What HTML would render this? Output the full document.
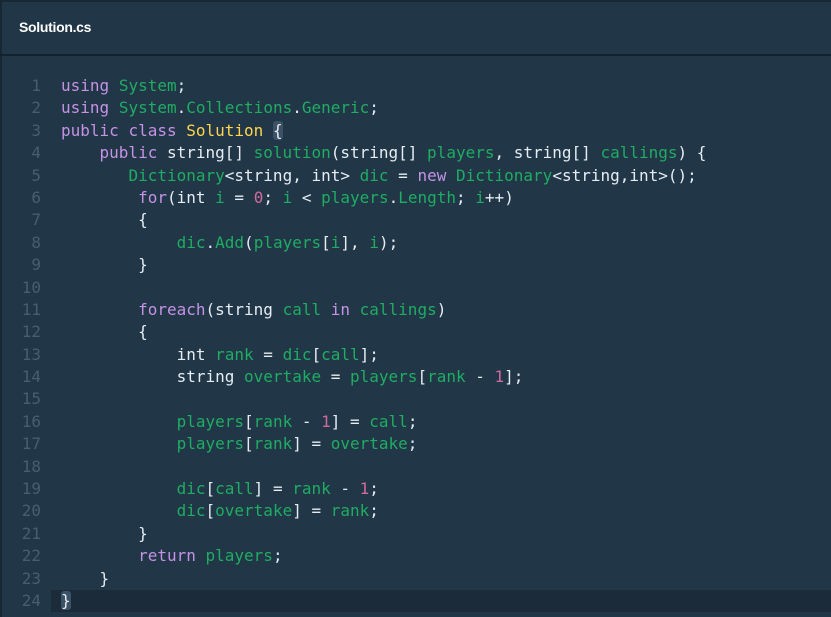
<!DOCTYPE html>
<html><head><meta charset="utf-8">
<style>
html,body{margin:0;padding:0;height:617px;overflow:hidden}
body{width:831px;height:617px;background:#213647;position:relative;overflow:hidden;font-family:"DejaVu Sans Mono","Liberation Mono",monospace}
.top{position:absolute;left:0;top:0;width:831px;height:2px;background:#172835}
.left{position:absolute;left:0;top:0;width:2px;height:617px;background:#172835}
.hdr{position:absolute;left:19px;top:19px;font-family:"Liberation Sans",sans-serif;font-weight:bold;font-size:14px;color:#fff;letter-spacing:-0.3px}
.div{position:absolute;left:0;top:54px;width:831px;height:2px;background:#14222e}
.code{position:absolute;left:0;top:75px;width:831px;font-size:16px;line-height:22.4px;white-space:normal}
.ln{position:relative;height:22.4px;color:#e6edf2}
.ln .no{position:absolute;left:0;width:41px;text-align:right;color:#475e72;white-space:pre}
.ln .t{position:absolute;left:61px;white-space:pre}
.act{background:#1b2b39;margin-left:51px}
.act .no{left:-51px}
.act .t{left:10px}
.k{color:#c592e6}.g{color:#1fad63}.y{color:#ffd54f}.n{color:#d16a9c}
.b{background:#3c5266;border-radius:3px}
</style></head><body>
<div class="top"></div><div class="left"></div>
<div class="hdr">Solution.cs</div>
<div class="div"></div>
<div class="code"><div class="ln"><span class="no">1</span><span class="t"><span class="k">using</span> <span class="g">System</span>;</span></div><div class="ln"><span class="no">2</span><span class="t"><span class="k">using</span> <span class="g">System</span>.<span class="g">Collections</span>.<span class="g">Generic</span>;</span></div><div class="ln"><span class="no">3</span><span class="t"><span class="k">public</span> <span class="k">class</span> <span class="y">Solution</span> <span class="b">{</span></span></div><div class="ln"><span class="no">4</span><span class="t">    <span class="k">public</span> string[] <span class="g">solution</span>(string[] <span class="g">players</span>, string[] <span class="g">callings</span>) {</span></div><div class="ln"><span class="no">5</span><span class="t">       <span class="g">Dictionary</span>&lt;string, int&gt; <span class="g">dic</span> = <span class="k">new</span> <span class="g">Dictionary</span>&lt;string,int&gt;();</span></div><div class="ln"><span class="no">6</span><span class="t">        <span class="k">for</span>(int <span class="g">i</span> = <span class="n">0</span>; <span class="g">i</span> &lt; <span class="g">players</span>.<span class="g">Length</span>; <span class="g">i</span>++)</span></div><div class="ln"><span class="no">7</span><span class="t">        {</span></div><div class="ln"><span class="no">8</span><span class="t">            <span class="g">dic</span>.<span class="g">Add</span>(<span class="g">players</span>[<span class="g">i</span>], <span class="g">i</span>);</span></div><div class="ln"><span class="no">9</span><span class="t">        }</span></div><div class="ln"><span class="no">10</span><span class="t"></span></div><div class="ln"><span class="no">11</span><span class="t">        <span class="k">foreach</span>(string <span class="g">call</span> <span class="k">in</span> <span class="g">callings</span>)</span></div><div class="ln"><span class="no">12</span><span class="t">        {</span></div><div class="ln"><span class="no">13</span><span class="t">            int <span class="g">rank</span> = <span class="g">dic</span>[<span class="g">call</span>];</span></div><div class="ln"><span class="no">14</span><span class="t">            string <span class="g">overtake</span> = <span class="g">players</span>[<span class="g">rank</span> - <span class="n">1</span>];</span></div><div class="ln"><span class="no">15</span><span class="t"></span></div><div class="ln"><span class="no">16</span><span class="t">            <span class="g">players</span>[<span class="g">rank</span> - <span class="n">1</span>] = <span class="g">call</span>;</span></div><div class="ln"><span class="no">17</span><span class="t">            <span class="g">players</span>[<span class="g">rank</span>] = <span class="g">overtake</span>;</span></div><div class="ln"><span class="no">18</span><span class="t"></span></div><div class="ln"><span class="no">19</span><span class="t">            <span class="g">dic</span>[<span class="g">call</span>] = <span class="g">rank</span> - <span class="n">1</span>;</span></div><div class="ln"><span class="no">20</span><span class="t">            <span class="g">dic</span>[<span class="g">overtake</span>] = <span class="g">rank</span>;</span></div><div class="ln"><span class="no">21</span><span class="t">        }</span></div><div class="ln"><span class="no">22</span><span class="t">        <span class="k">return</span> <span class="g">players</span>;</span></div><div class="ln"><span class="no">23</span><span class="t">    }</span></div><div class="ln act"><span class="no">24</span><span class="t"><span class="b">}</span></span></div></div>
</body></html>
